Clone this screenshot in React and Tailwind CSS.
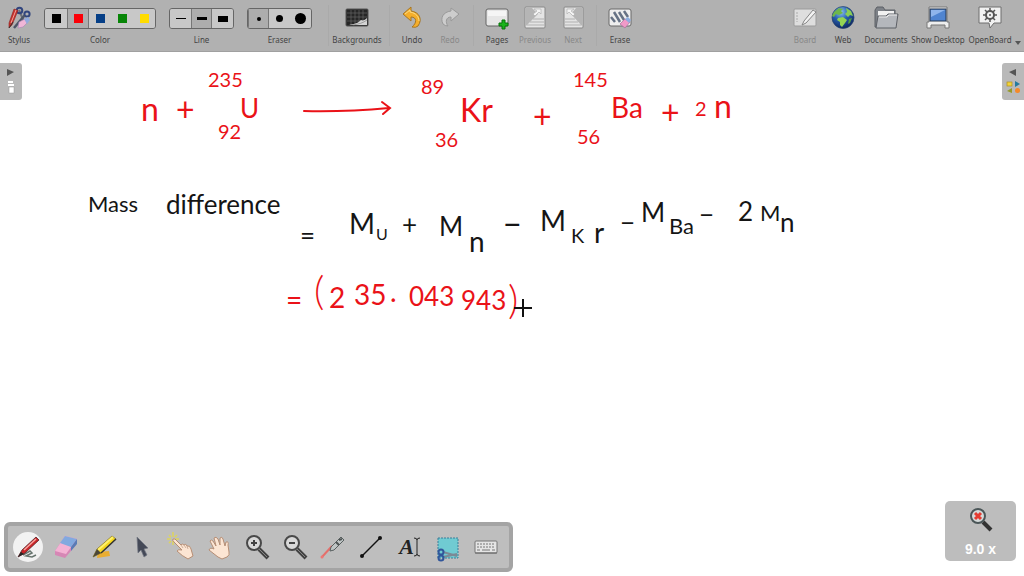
import React, { useState } from "react";

const StylusIcon = () => {
  return (
    <svg width="26" height="26" viewBox="0 0 26 26" fill="none">
      <path d="M13 5L19 19" stroke="#6b6f7a" strokeWidth="2" />
      <circle cx="13.500" cy="5.500" r="2.800" stroke="#31457e" strokeWidth="2" />
      <circle cx="21" cy="9" r="2.600" stroke="#31457e" strokeWidth="2" />
      <path d="M18.500 10.500L8 23" stroke="#4c5568" strokeWidth="2.500" />
      <path d="M8 4L12 5.500L6 20L3 23L3 18Z" fill="#c5302c" stroke="#8d2623" strokeWidth=".6" />
      <path d="M10 5L5 18" stroke="#f0a29a" />
      <path d="M13 17L19 14L22 17L17 22L12 23Z" fill="#f0b6d7" stroke="#a885b7" strokeWidth=".6" />
      <path d="M18 14L22 12L24 15L21 19Z" fill="#91aadd" />
      <path d="M3 23L7 17" stroke="#333" />
    </svg>
  );
};

const BackgroundsIcon = () => {
  return (
    <svg width="26" height="26" viewBox="0 0 26 26" fill="none">
      <rect x="2" y="4" width="22" height="17" rx="1" fill="#262626" stroke="#555" />
      <path d="M3 8H23M3 12H23M3 16H23M7 5V20M11 5V20M15 5V20M19 5V20" stroke="#666" strokeWidth=".7" />
      <path d="M5 20C11 19 14 18 17 15C19 16 21 15 23 13V20Z" fill="#d5d5d5" />
      <path d="M9 20C15 19 19 18 23 15" stroke="#777" strokeWidth=".6" />
    </svg>
  );
};

const UndoIcon = () => {
  return (
    <svg width="26" height="26" viewBox="0 0 26 26" fill="none">
      <path d="M4 9L12 2V6C20 7 24 14 19 21Q17 23 13 22C18 18 18 12 12 12V16Z" fill="#f5ae2b" stroke="#a57624" strokeLinejoin="round" />
      <path d="M6 9L11 5V7C17 8 20 12 20 16" stroke="#fbdc86" />
    </svg>
  );
};

const RedoIcon = () => {
  return (
    <svg width="26" height="26" viewBox="0 0 26 26" fill="none">
      <path d="M22 9L14 3V6C6 7 3 13 6 19Q8 21 11 21C8 17 9 12 14 12V16Z" fill="#cdcdcd" stroke="#999" strokeLinejoin="round" />
    </svg>
  );
};

const PagesIcon = () => {
  return (
    <svg width="26" height="26" viewBox="0 0 26 26" fill="none">
      <rect x="2" y="4" width="22" height="17" rx="2" fill="#e6e6e6" stroke="#656565" />
      <path d="M4 6H22V11H4Z" fill="#f5f5f5" />
      <path d="M18 15H21V18H24V21H21V24H18V21H15V18H18Z" fill="#19b31b" stroke="#08720b" strokeLinejoin="round" />
    </svg>
  );
};

const PreviousIcon = () => {
  return (
    <svg width="26" height="26" viewBox="0 0 26 26" fill="none">
      <rect x="3" y="2" width="20" height="21" rx="1" fill="#e4e4e4" stroke="#888" />
      <path d="M4 3H10L16 9L4 21Z" fill="#b5b5b5" />
      <path d="M12 4H19V9L17 7L13 11L11 9L15 6Z" fill="#f4f4f4" stroke="#aaa" strokeWidth=".6" />
      <path d="M5 20H22M8 17H22M11 14H22" stroke="#b0b0b0" />
    </svg>
  );
};

const NextIcon = () => {
  return (
    <svg width="26" height="26" viewBox="0 0 26 26" fill="none">
      <rect x="4" y="2" width="19" height="21" rx="1" fill="#e4e4e4" stroke="#888" />
      <path d="M22 3H16L11 9L22 21Z" fill="#b5b5b5" />
      <path d="M14 4H7V9L9 7L13 11L15 9L11 6Z" fill="#f4f4f4" stroke="#aaa" strokeWidth=".6" />
      <path d="M5 20H21M5 17H18M5 14H15" stroke="#b0b0b0" />
    </svg>
  );
};

const EraseIcon = () => {
  return (
    <svg width="26" height="26" viewBox="0 0 26 26" fill="none">
      <rect x="2" y="4" width="22" height="17" rx="2" fill="#eee" stroke="#686868" />
      <path d="M4 12L8 17M7 7L13 17M12 7L17 15M17 6L21 12" stroke="#667285" strokeWidth="2.500" />
      <path d="M13 19L18 14L23 17L18 23Z" fill="#f19ac8" stroke="#a66d9b" strokeWidth=".7" />
      <path d="M18 14L21 12L24 15L22 18Z" fill="#8daedf" />
    </svg>
  );
};

const BoardIcon = () => {
  return (
    <svg width="26" height="26" viewBox="0 0 26 26" fill="none">
      <rect x="2" y="4" width="22" height="17" rx="1" fill="#dedede" stroke="#9b9b9b" />
      <path d="M5 7V17" stroke="#aaa" strokeDasharray="2 1" />
      <path d="M21 5L24 7L14 18L10 20L12 16Z" fill="#f2f2f2" stroke="#858585" />
    </svg>
  );
};

const WebIcon = () => {
  return (
    <svg width="26" height="26" viewBox="0 0 26 26" fill="none">
      <defs>
        <radialGradient id="globe" cx=".4" cy=".25" r=".8">
          <stop stopColor="#8dc3f0" />
          <stop offset=".45" stopColor="#285fae" />
          <stop offset="1" stopColor="#0b2157" />
        </radialGradient>
      </defs>
      <circle cx="13" cy="12.500" r="11" fill="url(#globe)" stroke="#27446f" strokeWidth=".7" />
      <path d="M4 7L9 3L13 4L11 6L13 8L9 10L6 9L4 12L2 11Z" fill="#6eb64b" />
      <path d="M16 3L21 6L23 11L20 10L18 12L15 9L17 7Z" fill="#8acc55" />
      <path d="M8 13L13 12L17 15L15 18L12 22L10 20L10 17L7 15Z" fill="#94d353" />
      <path d="M19 14L22 13L20 18L18 19Z" fill="#549a43" />
    </svg>
  );
};

const DocumentsIcon = () => {
  return (
    <svg width="26" height="26" viewBox="0 0 26 26" fill="none">
      <path d="M2 22V5L4 2H10L12 5H22V22Z" fill="#7d8187" stroke="#5d6066" />
      <path d="M5 6H21V19H5Z" fill="#f1f1f1" />
      <path d="M3 23L5 11H13L15 9H25L23 23Z" fill="#b4b7bc" stroke="#5d6066" />
      <path d="M6 12H14L16 10H24" stroke="#ececec" />
    </svg>
  );
};

const DesktopIcon = () => {
  return (
    <svg width="26" height="26" viewBox="0 0 26 26" fill="none">
      <path d="M4 2H22V17H24V23H20V20H6V23H2V17H4Z" fill="#eee" stroke="#777" />
      <rect x="5" y="4" width="16" height="12" fill="#4f84d0" stroke="#27364e" />
      <path d="M6 5H20L6 12Z" fill="#8fb5eb" />
    </svg>
  );
};

const OpenBoardIcon = () => {
  return (
    <svg width="26" height="26" viewBox="0 0 26 26" fill="none">
      <path d="M2 2H24V18H17L13 23L12 18H2Z" fill="#f1f1f1" stroke="#6f6f6f" />
      <circle cx="13" cy="10" r="4" stroke="#555" strokeWidth="2" />
      <path d="M13 3V6M13 14V17M6 10H9M17 10H20M8 5L10 7M16 13L18 15M18 5L16 7M10 13L8 15" stroke="#555" strokeWidth="1.500" />
      <circle cx="13" cy="10" r="1" fill="#555" />
    </svg>
  );
};

const PenIcon = () => {
  return (
    <svg width="32" height="32" viewBox="0 0 32 32" fill="none">
      <circle cx="16" cy="16" r="15" fill="#f2f2f2" />
      <path d="M11 24L18 20L20 22L14 25L20 26L24 24" stroke="#68756f" strokeWidth="1.500" />
      <path d="M24 6L27 9L13 22L6 26L10 19Z" fill="#ca2428" stroke="#54262a" strokeWidth=".8" />
      <path d="M24 8L12 19" stroke="#f8a6a0" strokeWidth="1.500" />
      <path d="M6 26L9 21L12 23Z" fill="#252525" />
    </svg>
  );
};

const RubberIcon = () => {
  return (
    <svg width="32" height="32" viewBox="0 0 32 32" fill="none">
      <path d="M15 5L27 8L26 14L15 27L5 24L5 20Z" fill="#d687b5" />
      <path d="M15 5L27 8L16 23L5 20Z" fill="#f4b2d4" />
      <path d="M15 5L27 8L21 16L10 12Z" fill="#82a9df" />
      <path d="M21 16L27 8V13L21 20Z" fill="#597cb6" />
    </svg>
  );
};

const MarkerIcon = () => {
  return (
    <svg width="32" height="32" viewBox="0 0 32 32" fill="none">
      <path d="M10 21L21 20L22 25L9 27Z" fill="#e9ad31" />
      <path d="M24 5L28 8L13 22L5 26L9 18Z" fill="#f4d51e" stroke="#7c6d28" strokeWidth=".7" />
      <path d="M25 6L10 19" stroke="#fff16a" strokeWidth="2" />
      <path d="M28 8L13 22" stroke="#333" strokeWidth="1.500" />
      <path d="M9 18L13 22L5 26Z" fill="#4a4638" />
    </svg>
  );
};

const ArrowIcon = () => {
  return (
    <svg width="32" height="32" viewBox="0 0 32 32" fill="none">
      <path d="M11 6L22 17L18 18L21 24L18 26L15 19L12 22Z" fill="#444957" stroke="#737783" strokeWidth=".7" />
    </svg>
  );
};

const PointerIcon = () => {
  return (
    <svg width="32" height="32" viewBox="0 0 32 32" fill="none">
      <path d="M8 1V6M8 10V14M2 8H6M10 8H14M4 4L6 6M10 10L12 12M12 4L10 6M4 12L6 10" stroke="#ded45c" strokeWidth="1.500" />
      <path d="M8 8Q10 7 12 10L16 14Q17 12 19 14Q21 12 22 15Q25 14 26 18L28 25L23 28Q17 25 12 20Q13 18 17 19L9 11Q7 9 8 8Z" fill="#fce5d3" stroke="#b68e75" />
      <path d="M16 14L18 17M19 14L21 17M22 15L23 18" stroke="#c5a58f" strokeWidth=".8" />
    </svg>
  );
};

const HandIcon = () => {
  return (
    <svg width="32" height="32" viewBox="0 0 32 32" fill="none">
      <path d="M15 26L6 19Q7 16 11 18L7 10Q8 8 10 10L13 15L11 7Q13 5 15 8L17 14V7Q19 5 20 8L22 15L23 11Q26 10 25 14L26 21Q27 24 24 26L19 28Z" fill="#fce5d3" stroke="#b68e75" />
    </svg>
  );
};

const Magnifier = ({ children }) => {
  return (
    <svg width="32" height="32" viewBox="0 0 32 32" fill="none">
      <path d="M18 18L27 27" stroke="#424242" strokeWidth="4" />
      <path d="M17 17L26 26" stroke="#858585" />
      <circle cx="13" cy="12" r="7" fill="#d9d9d9" stroke="#494949" strokeWidth="2" />
      {children}
    </svg>
  );
};

const LaserIcon = () => {
  return (
    <svg width="32" height="32" viewBox="0 0 32 32" fill="none">
      <path d="M5 26L15 15" stroke="#e46f6b" strokeWidth="2" />
      <circle cx="5" cy="26" r="1.500" fill="#ed7774" />
      <path d="M14 16L24 6L27 9L17 19L13 20Z" fill="#bfc5c5" stroke="#596060" />
      <path d="M19 11L22 14M22 9L25 8" stroke="#4f5555" strokeWidth="2" />
    </svg>
  );
};

const LineIcon = () => {
  return (
    <svg width="32" height="32" viewBox="0 0 32 32" fill="none">
      <path d="M7 25L25 7" stroke="#111" strokeWidth="1.500" />
      <circle cx="7" cy="25" r="2" fill="#111" />
      <circle cx="25" cy="7" r="2" fill="#111" />
    </svg>
  );
};

const CaptureIcon = () => {
  return (
    <svg width="32" height="32" viewBox="0 0 32 32" fill="none">
      <rect x="6" y="7" width="20" height="20" fill="#70cbd2" stroke="#397e99" strokeDasharray="2 1" />
      <path d="M11 21L25 25M11 26L25 23" stroke="#7c8995" strokeWidth="2" />
      <circle cx="9" cy="21" r="2.500" stroke="#31569b" strokeWidth="2" />
      <circle cx="9" cy="27" r="2.500" stroke="#31569b" strokeWidth="2" />
    </svg>
  );
};

const KeyboardIcon = () => {
  return (
    <svg width="32" height="32" viewBox="0 0 32 32" fill="none">
      <rect x="5" y="10" width="22" height="12" rx="1" fill="#e5e5e5" stroke="#777" />
      <path d="M7 13H25M7 16H25" stroke="#777" strokeDasharray="2 1" />
      <path d="M7 19H10M12 19H20M22 19H25" stroke="#777" />
      <path d="M5 22H27" stroke="#666" />
    </svg>
  );
};

const ToolButton = ({ label, icon, width = "w-[38px]", disabled }) => {
  return (
    <button disabled={disabled} className={width + " flex shrink-0 flex-col items-center gap-[3px] text-[#444] disabled:text-[#888]"}>
      {icon}
      <span className="whitespace-nowrap text-[8px] leading-3">{label}</span>
    </button>
  );
};

const Palette = ({ label, items, initial }) => {
  const [selected, setSelected] = useState(initial);

  return (
    <div className="flex shrink-0 flex-col items-center gap-[5px] pt-[3px]">
      <div role="group" aria-label={label} className="flex h-[21px] overflow-hidden rounded-[3px] border border-[#666]">
        {items.map((e, i) => {
          return (
            <button
              key={i}
              aria-label={e.name}
              aria-pressed={selected === i}
              onClick={() => setSelected(i)}
              className={"flex items-center justify-center " + (items.length > 3 ? "w-[22px]" : "w-[21px]") + (selected === i ? " bg-[#adadad] border-x border-[#777]" : " bg-[#c8c8c8]")}
            >
              <span className={e.shape}></span>
            </button>
          );
        })}
      </div>
      <span className="text-[8px] leading-3 text-[#444]">{label}</span>
    </div>
  );
};

const colors = [
  { name: "Black", shape: "size-[9px] bg-black" },
  { name: "Red", shape: "size-[9px] bg-[#fb0007]" },
  { name: "Blue", shape: "size-[9px] bg-[#063f87]" },
  { name: "Green", shape: "size-[9px] bg-[#078507]" },
  { name: "Yellow", shape: "size-[9px] bg-[#ffdc00]" },
];

const lines = [
  { name: "Fine line", shape: "h-px w-[10px] bg-black" },
  { name: "Medium line", shape: "h-[3px] w-[10px] bg-black" },
  { name: "Strong line", shape: "h-[6px] w-[10px] bg-black" },
];

const erasers = [
  { name: "Small eraser", shape: "size-1 rounded-full bg-black" },
  { name: "Medium eraser", shape: "size-[7px] rounded-full bg-black" },
  { name: "Large eraser", shape: "size-[11px] rounded-full bg-black" },
];

// x and y are the start and the baseline on the board
const redInk = [
  { text: "n", x: 141, y: 69, size: 32 },
  { text: "+", x: 176, y: 69, size: 32 },
  { text: "235", x: 208, y: 35, size: 20 },
  { text: "U", x: 240, y: 66, size: 26 },
  { text: "92", x: 218, y: 87, size: 20 },
  { text: "89", x: 421, y: 42, size: 20 },
  { text: "Kr", x: 460, y: 70, size: 32 },
  { text: "36", x: 435, y: 95, size: 20 },
  { text: "+", x: 533, y: 76, size: 32 },
  { text: "145", x: 573, y: 35, size: 20 },
  { text: "56", x: 577, y: 92, size: 20 },
  { text: "Ba", x: 611, y: 66, size: 28 },
  { text: "+", x: 661, y: 72, size: 32 },
  { text: "2", x: 695, y: 64, size: 20 },
  { text: "n", x: 714, y: 66, size: 32 },
  { text: "=", x: 286, y: 258, size: 28 },
  { text: "(", x: 314, y: 253, size: 40, weight: 300 },
  { text: "2", x: 329, y: 256, size: 28 },
  { text: "35", x: 354, y: 253, size: 28 },
  { text: ".", x: 390, y: 250, size: 28 },
  { text: "043", x: 409, y: 254, size: 26 },
  { text: "943", x: 461, y: 258, size: 26 },
  { text: ")", x: 508, y: 262, size: 40, weight: 300 },
];

const blackInk = [
  { text: "Mass", x: 88, y: 160, size: 22 },
  { text: "difference", x: 166, y: 162, size: 26 },
  { text: "=", x: 300, y: 193, size: 26 },
  { text: "M", x: 349, y: 182, size: 28 },
  { text: "U", x: 376, y: 188, size: 16 },
  { text: "+", x: 402, y: 182, size: 26 },
  { text: "M", x: 439, y: 184, size: 26 },
  { text: "n", x: 469, y: 200, size: 28 },
  { text: "−", x: 503, y: 184, size: 32 },
  { text: "M", x: 540, y: 179, size: 28 },
  { text: "K", x: 571, y: 191, size: 20 },
  { text: "r", x: 594, y: 191, size: 28 },
  { text: "−", x: 620, y: 180, size: 26 },
  { text: "M", x: 641, y: 170, size: 26 },
  { text: "Ba", x: 669, y: 182, size: 22 },
  { text: "−", x: 699, y: 172, size: 26 },
  { text: "2", x: 738, y: 169, size: 26 },
  { text: "M", x: 760, y: 169, size: 22 },
  { text: "n", x: 780, y: 180, size: 26 },
];

const Ink = ({ items, color }) => {
  return (
    <g fill={color}>
      {items.map((e, i) => (
        <text key={i} x={e.x} y={e.y} fontSize={e.size} fontWeight={e.weight}>
          {e.text}
        </text>
      ))}
    </g>
  );
};

const stylusTools = [
  { name: "Pen", icon: <PenIcon /> },
  { name: "Eraser", icon: <RubberIcon /> },
  { name: "Marker", icon: <MarkerIcon /> },
  { name: "Select", icon: <ArrowIcon /> },
  { name: "Interact", icon: <PointerIcon /> },
  { name: "Scroll page", icon: <HandIcon /> },
  { name: "Zoom in", icon: <Magnifier><path d="M10 12H16M13 9V15" stroke="#444" strokeWidth="2" /></Magnifier> },
  { name: "Zoom out", icon: <Magnifier><path d="M10 12H16" stroke="#444" strokeWidth="2" /></Magnifier> },
  { name: "Laser pointer", icon: <LaserIcon /> },
  { name: "Draw line", icon: <LineIcon /> },
  {
    name: "Write text",
    icon: (
      <span className="flex items-center">
        <span className="font-['Liberation_Serif',serif] text-[22px] leading-8 font-bold text-[#222] italic">A</span>
        <svg width="6" height="20" viewBox="0 0 6 20" fill="none">
          <path d="M0 1Q3 1 3 3V17Q3 19 0 19M6 1Q3 1 3 3M3 17Q3 19 6 19" stroke="#222" />
        </svg>
      </span>
    ),
  },
  { name: "Capture", icon: <CaptureIcon /> },
  { name: "Virtual keyboard", icon: <KeyboardIcon /> },
];

const TopBar = () => {
  return (
    <header className="flex min-h-[52px] items-start border-b border-[#a0a0a0] bg-[#b1b1b1] pt-[5px]">
      <ToolButton label="Stylus" icon={<StylusIcon />} />
      <div className="ml-[6px] flex gap-[13px]">
        <Palette label="Color" items={colors} initial={1} />
        <Palette label="Line" items={lines} initial={1} />
        <Palette label="Eraser" items={erasers} initial={0} />
      </div>
      <div className="ml-4 flex border-l border-[#aaa] pl-1">
        <ToolButton label="Backgrounds" icon={<BackgroundsIcon />} width="w-12" />
      </div>
      <div className="ml-2 flex border-l border-[#aaa] pl-[3px]">
        <ToolButton label="Undo" icon={<UndoIcon />} />
        <ToolButton label="Redo" icon={<RedoIcon />} disabled />
      </div>
      <div className="ml-1 flex border-l border-[#aaa] pl-1">
        <ToolButton label="Pages" icon={<PagesIcon />} />
        <ToolButton label="Previous" icon={<PreviousIcon />} disabled />
        <ToolButton label="Next" icon={<NextIcon />} disabled />
      </div>
      <div className="ml-1 flex border-l border-[#aaa] pl-1">
        <ToolButton label="Erase" icon={<EraseIcon />} />
      </div>
      <nav className="ml-auto flex pr-[2px]">
        <ToolButton label="Board" icon={<BoardIcon />} disabled />
        <ToolButton label="Web" icon={<WebIcon />} />
        <ToolButton label="Documents" icon={<DocumentsIcon />} width="w-12" />
        <ToolButton label="Show Desktop" icon={<DesktopIcon />} width="w-14" />
        <ToolButton label="OpenBoard" icon={<OpenBoardIcon />} width="w-12" />
        <svg className="mt-9" width="8" height="5" viewBox="0 0 8 5">
          <path d="M1 0H7L4 4Z" fill="#555" />
        </svg>
      </nav>
    </header>
  );
};

const App = () => {
  return (
    <div className="flex min-h-screen flex-col bg-white font-['Noto_Sans',sans-serif]">
      <TopBar />
      <main className="relative min-h-[480px] flex-1 overflow-hidden">
        <svg className="absolute inset-0 h-full w-full font-['Lato',sans-serif]" fill="none">
          <Ink items={redInk} color="#ea1218" />
          <Ink items={blackInk} color="#151515" />
          <path d="M304 59Q345 60 389 56M382 50L390 56L383 62" stroke="#ea1218" strokeWidth="2" strokeLinecap="round" />
          <path d="M514 256H532M523 247V265" stroke="#111" strokeWidth="2" />
        </svg>

        <button aria-label="Page thumbnails" className="absolute top-[11px] left-0 flex h-[37px] w-[22px] justify-center rounded-r-[3px] bg-[#b9b9b9]">
          <svg width="22" height="37" viewBox="0 0 22 37" fill="none">
            <path d="M7 6L14 9L7 13Z" fill="#555" />
            <path d="M8 19H13M8 22H14" stroke="#fff" strokeWidth="2" />
            <rect x="9" y="24" width="5" height="6" fill="#fff" stroke="#999" strokeWidth=".5" />
          </svg>
        </button>
        <button aria-label="Library" className="absolute top-[11px] right-0 flex h-[37px] w-[22px] justify-center rounded-l-[3px] bg-[#b9b9b9]">
          <svg width="22" height="37" viewBox="0 0 22 37" fill="none">
            <path d="M14 6L7 9L14 13Z" fill="#555" />
            <rect x="5" y="19" width="5" height="4" fill="#f1d33a" stroke="#b3921c" strokeWidth=".7" />
            <path d="M13 18L18 21L13 24Z" fill="#257b9e" />
            <path d="M10 25V30L5 28Z" fill="#969a29" />
            <circle cx="15.500" cy="27.500" r="2.500" fill="#f58a29" />
          </svg>
        </button>

        <div role="toolbar" aria-label="Stylus palette" className="absolute bottom-1 left-1 flex h-[50px] w-[509px] items-center justify-between rounded-md border-4 border-[#a4a4a4] bg-[#bebebe] pr-1 pl-px">
          {stylusTools.map((e) => (
            <button key={e.name} aria-label={e.name} className="flex h-8 w-[38px] items-center justify-center">
              {e.icon}
            </button>
          ))}
        </div>

        <div className="absolute right-2 bottom-[15px] flex h-[60px] w-[71px] flex-col items-center justify-between rounded-[5px] bg-[#bdbdbd] pt-1 pb-1">
          <svg width="32" height="30" viewBox="0 0 32 30" fill="none">
            <path d="M18 17L26 25" stroke="#333" strokeWidth="4" />
            <circle cx="13" cy="11" r="7" fill="#d5dada" stroke="#4b5658" strokeWidth="2" />
            <path d="M10 8L16 14M16 8L10 14" stroke="#e43c32" strokeWidth="3" />
          </svg>
          <span className="font-['Liberation_Sans',sans-serif] text-[14px] leading-4 font-bold text-white">9.0 x</span>
        </div>
      </main>
    </div>
  );
};

export default App;
